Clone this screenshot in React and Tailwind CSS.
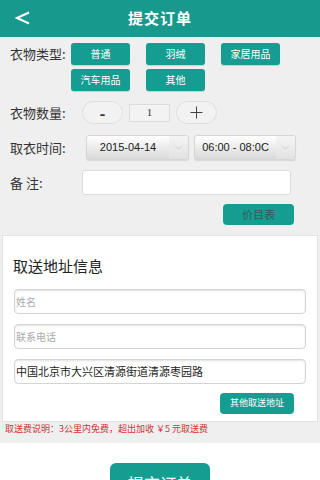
import { ChevronDown } from 'lucide-react';

const cjk = { fontFamily: '"Noto Sans CJK SC", "Liberation Sans", sans-serif' };

function TypeButton({ label }) {
  return (
    <button className="w-[59px] h-[22px] rounded-[3px] bg-[#169d91] text-white text-[10px] leading-none flex items-center justify-center shadow-[0_1px_1px_rgba(0,0,0,0.15)]">
      {label}
    </button>
  );
}

function Select({ value, width }) {
  return (
    <div className={`${width} h-[25px] flex rounded-[3px] border border-[#d6d6d6] bg-gradient-to-b from-white to-[#d9d9d9] shadow-[0_1px_1px_rgba(0,0,0,0.1)] overflow-hidden`}>
      <div
        className="flex-1 flex items-center justify-center text-[11px] text-[#222] overflow-hidden whitespace-nowrap"
        style={{ fontFamily: '"Liberation Sans", Arial, sans-serif' }}
      >
        {value}
      </div>
      <div className="w-[19px] flex items-center justify-center bg-gradient-to-b from-[#f4f4f4] to-[#e2e2e2]">
        <ChevronDown size={13} strokeWidth={1} color="#b9b9b9" />
      </div>
    </div>
  );
}

function Field({ placeholder, value }) {
  return (
    <div className="h-[25px] mx-[11px] rounded-[4px] border border-[#d4d4d4] bg-white shadow-[inset_0_1px_2px_rgba(0,0,0,0.12)] flex items-center px-[1px]">
      {value ? (
        <span className="text-[11px] text-[#222]">{value}</span>
      ) : (
        <span className="text-[10px] text-[#aaa]">{placeholder}</span>
      )}
    </div>
  );
}

export default function App() {
  return (
    <div className="w-[320px] h-[480px] overflow-hidden bg-[#efeff0]" style={cjk}>
      {/* header */}
      <div className="h-[37px] bg-[#179a8d] flex items-center relative">
        <svg className="absolute left-[15px] top-[11px]" width="15" height="14" viewBox="0 0 15 14">
          <path d="M14 1.5 L2 7 L14 12.5" fill="none" stroke="white" strokeWidth="2" />
        </svg>
        <div className="flex-1 text-center text-white text-[15px] font-semibold tracking-[1px]">提交订单</div>
      </div>

      {/* form */}
      <div className="px-[10px] pt-[6px]">
        <div className="flex">
          <div className="w-[61px] text-[13px] text-[#333] pt-[1px]">衣物类型:</div>
          <div className="grid grid-cols-[59px_59px_59px] gap-x-[16px] gap-y-[4px]">
            <TypeButton label="普通" />
            <TypeButton label="羽绒" />
            <TypeButton label="家居用品" />
            <TypeButton label="汽车用品" />
            <TypeButton label="其他" />
          </div>
        </div>

        <div className="flex items-center mt-[10px] h-[23px]">
          <div className="w-[72px] text-[13px] text-[#333]">衣物数量:</div>
          <button className="w-[41px] h-[23px] rounded-full border border-[#dedede] bg-[#f2f2f2] text-[16px] font-bold text-[#333] leading-none">-</button>
          <div className="w-[41px] h-[18px] ml-[6px] border border-[#dcdcdc] bg-[#f3f3f3] flex items-center justify-center text-[11px] text-[#333]" style={{ fontFamily: '"Liberation Serif", serif' }}>1</div>
          <button className="w-[41px] h-[23px] ml-[6px] rounded-full border border-[#dedede] bg-[#f2f2f2] flex items-center justify-center">
            <svg width="13" height="13" viewBox="0 0 13 13"><path d="M6.5 0.5 V12.5 M0.5 6.5 H12.5" stroke="#444" strokeWidth="1" /></svg>
          </button>
        </div>

        <div className="flex items-center mt-[11px]">
          <div className="w-[76px] text-[13px] text-[#333]">取衣时间:</div>
          <Select value="2015-04-14" width="w-[103px]" />
          <div className="ml-[5px]">
            <Select value="06:00 - 08:0C" width="w-[102px]" />
          </div>
        </div>

        <div className="flex items-center mt-[10px]">
          <div className="w-[72px] text-[13px] text-[#333]">备 注:</div>
          <div className="w-[209px] h-[25px] rounded-[3px] border border-[#dcdcdc] bg-white" />
        </div>

        <div className="flex justify-end mt-[9px] pr-[16px]">
          <button className="w-[71px] h-[21px] rounded-[4px] bg-[#169d91] text-[11px] text-[#2e5e59] flex items-center justify-center">价目表</button>
        </div>
      </div>

      {/* address card */}
      <div className="mt-[10px] mx-[2px] bg-white border border-[#e2e2e2] pb-[7px]">
        <div className="px-[10px] pt-[19px] pb-[11px] text-[15px] text-[#222]">取送地址信息</div>
        <Field placeholder="姓名" />
        <div className="h-[10px]" />
        <Field placeholder="联系电话" />
        <div className="h-[10px]" />
        <Field value="中国北京市大兴区清源街道清源枣园路" />
        <div className="flex justify-end mt-[9px] pr-[23px]">
          <button className="w-[74px] h-[21px] rounded-[4px] bg-[#169d91] text-white text-[9px] flex items-center justify-center">其他取送地址</button>
        </div>
      </div>

      <div className="px-[5px] h-[21px] text-[9px] text-[#d0333a]" style={{ fontFamily: '"Noto Sans CJK SC", "Liberation Serif", serif' }}>
        取送费说明：3公里内免费，超出加收 ￥5 元取送费
      </div>

      <div className="bg-white h-[40px] flex justify-center pt-[20px]">
        <button className="w-[100px] h-[40px] rounded-[6px] bg-[#169d91] text-white text-[16px] shrink-0">提交订单</button>
      </div>
    </div>
  );
}
